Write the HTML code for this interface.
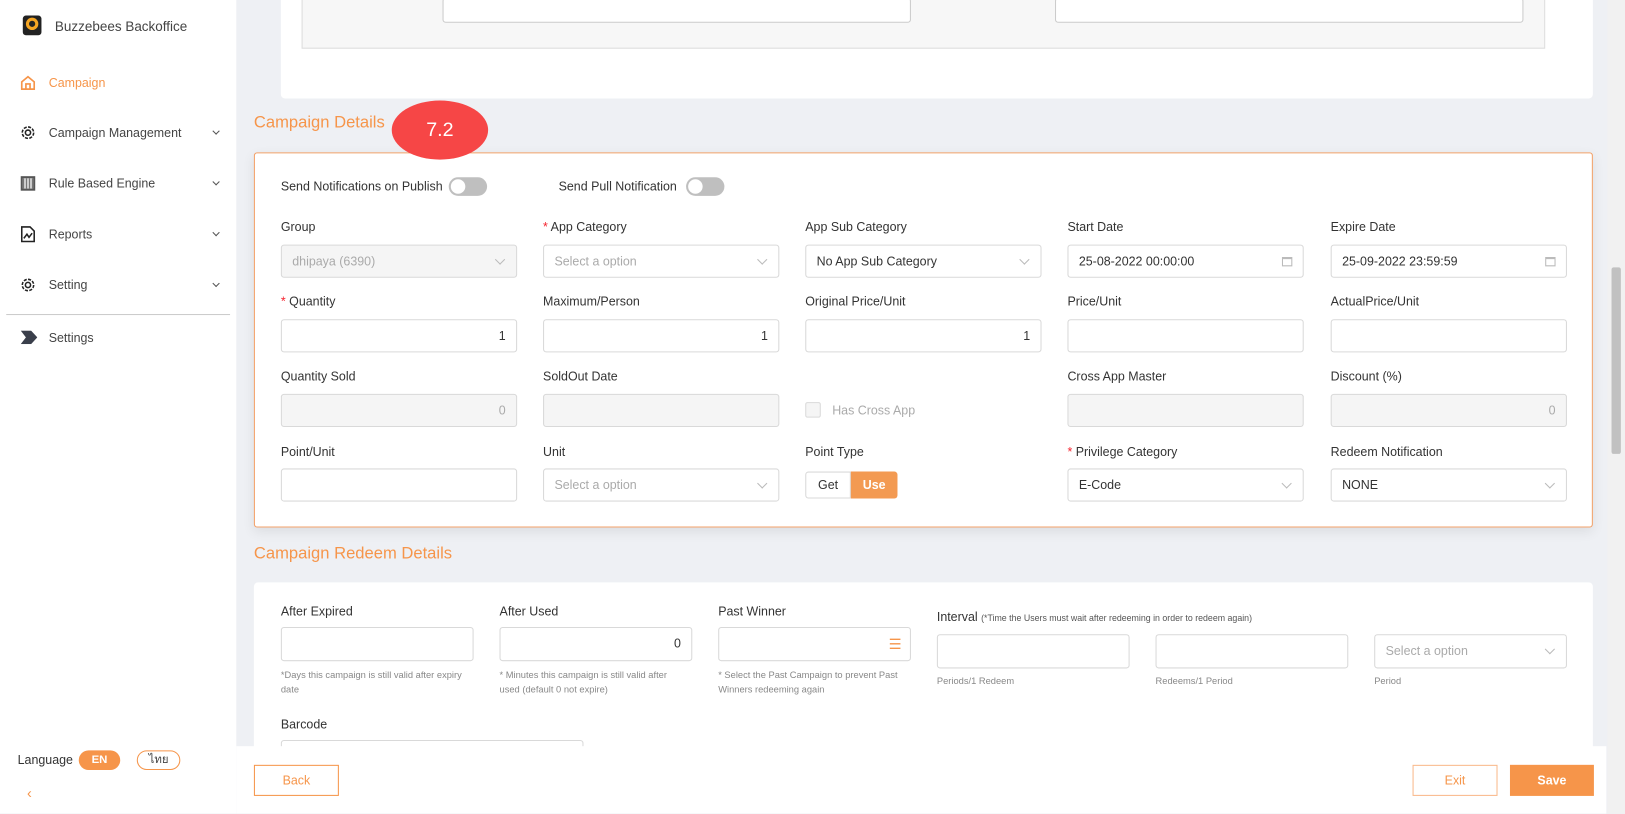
<!DOCTYPE html>
<html><head><meta charset="utf-8"><style>
*{box-sizing:border-box;margin:0;padding:0}
html,body{width:1625px;height:813px;overflow:hidden;background:#eef0f4}
body{font-family:"Liberation Sans","Noto Sans CJK SC",sans-serif;color:#333;font-size:12px}
#w{position:absolute;left:0;top:0;width:1568px;height:785px;transform:scale(1.03635);transform-origin:0 0;background:#eef0f4}
.a{position:absolute}
.side{left:0;top:0;width:228px;height:785px;background:#fff}
.mi{position:absolute;left:47px;font-size:12px;color:#444}
.chev{position:absolute;left:206px;width:5px;height:5px;border-right:1.3px solid #555;border-bottom:1.3px solid #555;transform:rotate(45deg)}
.lbl{position:absolute;font-size:12px;color:#333}
.inp{position:absolute;height:32px;width:228px;border:1px solid #d9d9d9;border-radius:3px;background:#fff;font-size:12px;padding:0 10px;line-height:30px;color:#333}
.dis{background:#f5f5f5;color:#aaa}
.r{text-align:right}
.ph{color:#aaa}
.dd:after{content:"";position:absolute;right:12px;top:10px;width:6px;height:6px;border-right:1px solid #bbb;border-bottom:1px solid #bbb;transform:rotate(45deg)}
.tog{position:absolute;width:37px;height:18px;border-radius:9px;background:#bfbfbf}
.tog:after{content:"";position:absolute;left:2px;top:2px;width:14px;height:14px;border-radius:50%;background:#fff}
.star{color:#f5222d}
.help{position:absolute;font-size:9px;color:#888;line-height:14px}
.cal{position:absolute;right:10px;top:11px;width:10px;height:9px;border:1px solid #bbb;border-top-width:2px}
</style></head><body><div id="w">
<div class="a side">
 <div class="a" style="left:22px;top:15px;width:18px;height:19px;background:#222;border-radius:3px"><div class="a" style="left:3px;top:2px;width:12px;height:12px;border-radius:50%;border:3px solid #f6a623;background:#222"></div></div>
 <div class="a" style="left:53px;top:18px;font-size:13px;color:#444">Buzzebees Backoffice</div>
 <svg class="a" style="left:19px;top:72px" width="16" height="16" viewBox="0 0 16 16"><path d="M2 7 L8 2 L14 7 V14 H2 Z M6 14 V9 H10 V14" fill="none" stroke="#f6954a" stroke-width="1.6"/></svg>
 <div class="mi" style="top:73px;color:#f6954a">Campaign</div>
 <svg class="a" style="left:19px;top:120px" width="16" height="16" viewBox="0 0 16 16"><circle cx="8" cy="8" r="2.5" fill="none" stroke="#222" stroke-width="1.5"/><circle cx="8" cy="8" r="5.5" fill="none" stroke="#222" stroke-width="1.5" stroke-dasharray="3 1.3"/></svg>
 <div class="mi" style="top:121px">Campaign Management</div><div class="chev" style="top:124px"></div>
 <div class="a" style="left:20px;top:170px;width:14px;height:14px;border:2px solid #555;background:repeating-linear-gradient(90deg,#777 0 1px,#ccc 1px 3px)"></div>
 <div class="mi" style="top:170px">Rule Based Engine</div><div class="chev" style="top:173px"></div>
 <svg class="a" style="left:20px;top:218px" width="14" height="16" viewBox="0 0 14 16"><path d="M1 1 H9 L13 5 V15 H1 Z M3 12 L6 8 L8 11 L11 7" fill="none" stroke="#222" stroke-width="1.5"/></svg>
 <div class="mi" style="top:219px">Reports</div><div class="chev" style="top:222px"></div>
 <svg class="a" style="left:19px;top:267px" width="16" height="16" viewBox="0 0 16 16"><circle cx="8" cy="8" r="2.5" fill="none" stroke="#222" stroke-width="1.5"/><circle cx="8" cy="8" r="5.5" fill="none" stroke="#222" stroke-width="1.5" stroke-dasharray="3 1.3"/></svg>
 <div class="mi" style="top:268px">Setting</div><div class="chev" style="top:271px"></div>
 <div class="a" style="left:6px;top:303px;width:216px;height:1px;background:#ccc"></div>
 <svg class="a" style="left:20px;top:319px" width="16" height="13" viewBox="0 0 16 13"><path d="M0 0 H10 L16 6.5 L10 13 H0 L5 6.5 Z" fill="#3a3f4b"/></svg>
 <div class="mi" style="top:319px">Settings</div>
 <div class="a" style="left:17px;top:726px;font-size:12px;color:#333">Language</div>
 <div class="a" style="left:76px;top:724px;width:40px;height:19px;border-radius:10px;background:#f6954a;color:#fff;font-size:11px;font-weight:bold;text-align:center;line-height:19px">EN</div>
 <div class="a" style="left:132px;top:724px;width:42px;height:19px;border-radius:10px;border:1px solid #f6954a;color:#444;font-size:11px;text-align:center;line-height:17px">ไทย</div>
 <div class="a" style="left:26px;top:757px;font-size:14px;color:#f6954a">&lsaquo;</div>
</div>

<div class="a" style="left:271px;top:0;width:1266px;height:95px;background:#fff;border-radius:0 0 4px 4px"></div>
<div class="a" style="left:291px;top:-2px;width:1200px;height:49px;border:1px solid #ddd;background:#f7f7f7"></div>
<div class="a" style="left:427px;top:-2px;width:452px;height:24px;border:1px solid #ccc;background:#fff;border-radius:3px"></div>
<div class="a" style="left:1018px;top:-2px;width:452px;height:24px;border:1px solid #ccc;background:#fff;border-radius:3px"></div>

<div class="a" style="left:245px;top:110px;font-size:16px;color:#f6954a">Campaign Details</div>
<div class="a" style="left:245px;top:147px;width:1292px;height:362px;background:#fff;border:1px solid #f3a26a;border-radius:3px;box-shadow:0 4px 12px rgba(0,0,0,.08)"></div>
<div class="a" style="left:378px;top:97px;width:93px;height:57px;border-radius:50%;background:#f64646;color:#fff;font-size:19px;text-align:center;line-height:57px">7.2</div>

<div class="lbl" style="left:271px;top:173px">Send Notifications on Publish</div><div class="tog" style="left:433px;top:171px"></div>
<div class="lbl" style="left:539px;top:173px">Send Pull Notification</div><div class="tog" style="left:662px;top:171px"></div>

<div class="lbl" style="left:271px;top:212px">Group</div>
<div class="lbl" style="left:524px;top:212px"><span class="star">*</span> App Category</div>
<div class="lbl" style="left:777px;top:212px">App Sub Category</div>
<div class="lbl" style="left:1030px;top:212px">Start Date</div>
<div class="lbl" style="left:1284px;top:212px">Expire Date</div>
<div class="inp dis dd" style="left:271px;top:236px">dhipaya (6390)</div>
<div class="inp dd ph" style="left:524px;top:236px">Select a option</div>
<div class="inp dd" style="left:777px;top:236px">No App Sub Category</div>
<div class="inp" style="left:1030px;top:236px">25-08-2022 00:00:00<span class="cal"></span></div>
<div class="inp" style="left:1284px;top:236px">25-09-2022 23:59:59<span class="cal"></span></div>

<div class="lbl" style="left:271px;top:284px"><span class="star">*</span> Quantity</div>
<div class="lbl" style="left:524px;top:284px">Maximum/Person</div>
<div class="lbl" style="left:777px;top:284px">Original Price/Unit</div>
<div class="lbl" style="left:1030px;top:284px">Price/Unit</div>
<div class="lbl" style="left:1284px;top:284px">ActualPrice/Unit</div>
<div class="inp r" style="left:271px;top:308px">1</div>
<div class="inp r" style="left:524px;top:308px">1</div>
<div class="inp r" style="left:777px;top:308px">1</div>
<div class="inp" style="left:1030px;top:308px"></div>
<div class="inp" style="left:1284px;top:308px"></div>

<div class="lbl" style="left:271px;top:356px">Quantity Sold</div>
<div class="lbl" style="left:524px;top:356px">SoldOut Date</div>
<div class="lbl" style="left:1030px;top:356px">Cross App Master</div>
<div class="lbl" style="left:1284px;top:356px">Discount (%)</div>
<div class="inp dis r" style="left:271px;top:380px">0</div>
<div class="inp dis" style="left:524px;top:380px"></div>
<div class="a" style="left:777px;top:388px;width:15px;height:15px;border:1px solid #d9d9d9;border-radius:2px;background:#f5f5f5"></div>
<div class="lbl" style="left:803px;top:389px;color:#aaa">Has Cross App</div>
<div class="inp dis" style="left:1030px;top:380px"></div>
<div class="inp dis r" style="left:1284px;top:380px">0</div>

<div class="lbl" style="left:271px;top:429px">Point/Unit</div>
<div class="lbl" style="left:524px;top:429px">Unit</div>
<div class="lbl" style="left:777px;top:429px">Point Type</div>
<div class="lbl" style="left:1030px;top:429px"><span class="star">*</span> Privilege Category</div>
<div class="lbl" style="left:1284px;top:429px">Redeem Notification</div>
<div class="inp" style="left:271px;top:452px"></div>
<div class="inp dd ph" style="left:524px;top:452px">Select a option</div>
<div class="a" style="left:777px;top:455px;width:44px;height:26px;border:1px solid #d9d9d9;border-radius:3px 0 0 3px;text-align:center;line-height:24px;font-size:12px">Get</div>
<div class="a" style="left:821px;top:455px;width:45px;height:26px;background:#f39a52;border-radius:0 3px 3px 0;color:#fff;text-align:center;line-height:26px;font-size:12px;font-weight:bold">Use</div>
<div class="inp dd" style="left:1030px;top:452px">E-Code</div>
<div class="inp dd" style="left:1284px;top:452px">NONE</div>

<div class="a" style="left:245px;top:526px;font-size:16px;color:#f6954a">Campaign Redeem Details</div>
<div class="a" style="left:245px;top:562px;width:1292px;height:200px;background:#fff;border-radius:4px"></div>
<div class="lbl" style="left:271px;top:583px">After Expired</div>
<div class="lbl" style="left:482px;top:583px">After Used</div>
<div class="lbl" style="left:693px;top:583px">Past Winner</div>
<div class="lbl" style="left:904px;top:588px">Interval <span style="font-size:8.5px;color:#555">(*Time the Users must wait after redeeming in order to redeem again)</span></div>
<div class="inp" style="left:271px;top:605px;width:186px;height:33px"></div>
<div class="inp r" style="left:482px;top:605px;width:186px;height:33px">0</div>
<div class="inp" style="left:693px;top:605px;width:186px;height:33px"><span style="position:absolute;right:8px;top:0;color:#f6954a;font-size:14px">&#9776;</span></div>
<div class="inp" style="left:904px;top:612px;width:186px;height:33px"></div>
<div class="inp" style="left:1115px;top:612px;width:186px;height:33px"></div>
<div class="inp dd ph" style="left:1326px;top:612px;width:186px;height:33px">Select a option</div>
<div class="help" style="left:271px;top:644px">*Days this campaign is still valid after expiry<br>date</div>
<div class="help" style="left:482px;top:644px">* Minutes this campaign is still valid after<br>used (default 0 not expire)</div>
<div class="help" style="left:693px;top:644px">* Select the Past Campaign to prevent Past<br>Winners redeeming again</div>
<div class="help" style="left:904px;top:650px">Periods/1 Redeem</div>
<div class="help" style="left:1115px;top:650px">Redeems/1 Period</div>
<div class="help" style="left:1326px;top:650px">Period</div>
<div class="lbl" style="left:271px;top:692px">Barcode</div>
<div class="a" style="left:271px;top:714px;width:292px;height:20px;border:1px solid #d9d9d9;border-radius:3px;background:#fff"></div>

<div class="a" style="left:228px;top:720px;width:1322px;height:65px;background:#fff"></div>
<div class="a" style="left:245px;top:738px;width:82px;height:30px;border:1px solid #f6954a;color:#f6954a;text-align:center;line-height:28px;font-size:12px">Back</div>
<div class="a" style="left:1363px;top:738px;width:82px;height:30px;border:1px solid #f9b98a;color:#f6954a;text-align:center;line-height:28px;font-size:12px">Exit</div>
<div class="a" style="left:1457px;top:738px;width:81px;height:30px;background:#f6954a;color:#fff;text-align:center;line-height:30px;font-size:12px;font-weight:bold">Save</div>

<div class="a" style="left:1551px;top:0;width:17px;height:785px;background:#f1f1f1"></div>
<div class="a" style="left:1555px;top:258px;width:9px;height:180px;background:#c1c1c1;border-radius:2px"></div>
</div></body></html>
